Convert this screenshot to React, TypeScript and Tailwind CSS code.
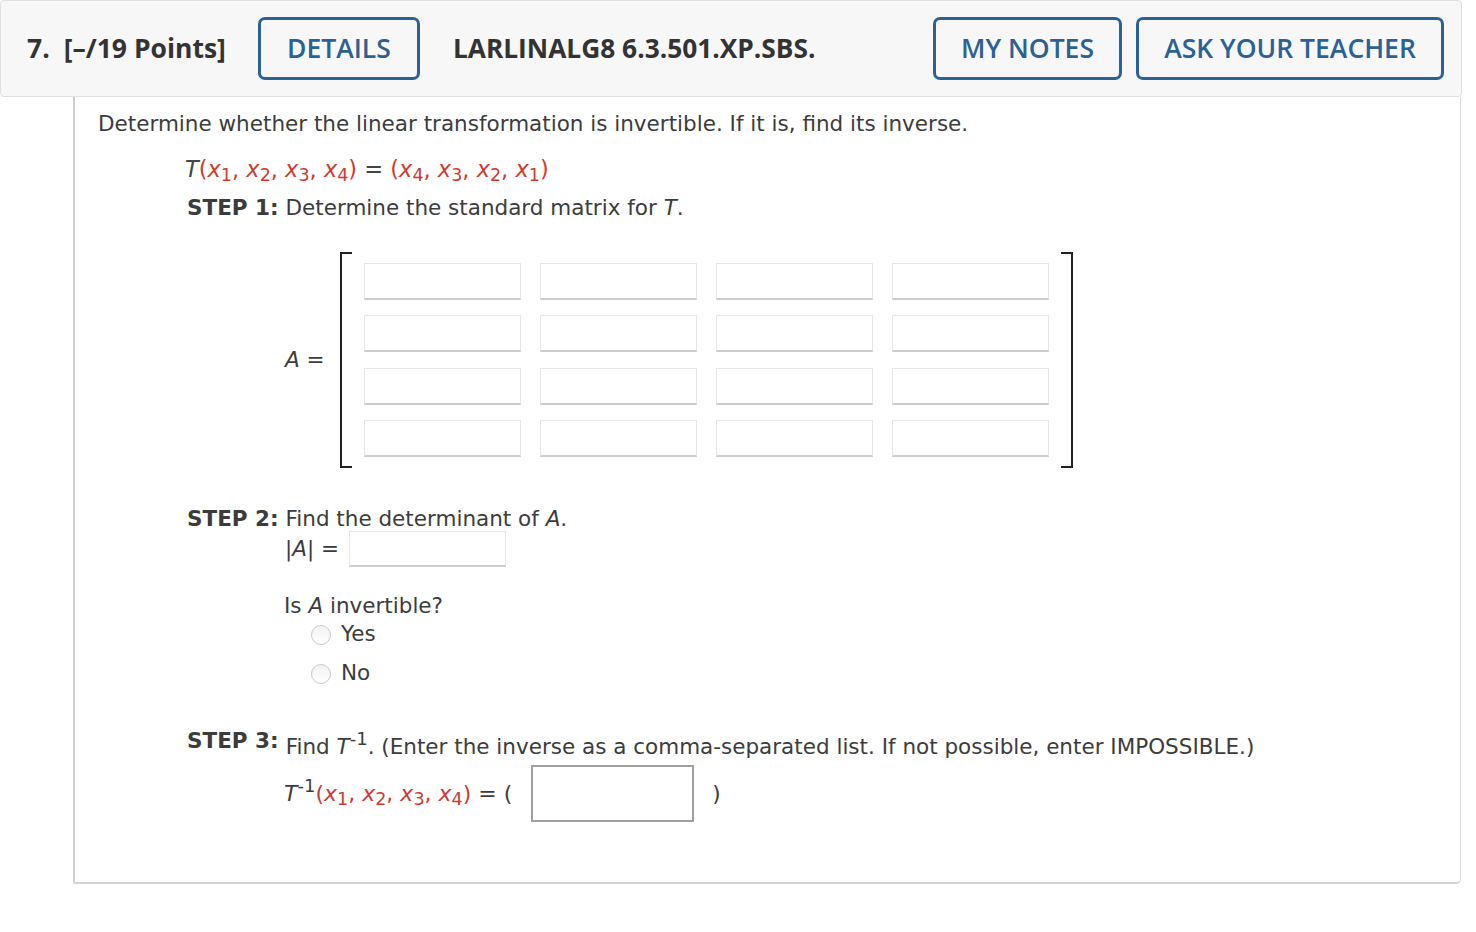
import React from "react";

const RED = "text-[#cf3a2f]";

function X({ n }: { n: number }) {
  return (
    <>
      <i>x</i>
      <sub className="text-[17.5px]">{n}</sub>
    </>
  );
}

function Cell() {
  return <div className="h-[37px] w-[157px] border border-[#e6e6e6] border-b-2 border-b-[#cdcdcd] bg-white" />;
}

function Radio({ label }: { label: string }) {
  return (
    <div className="flex h-[28px] items-center">
      <span className="mt-[2px] inline-block h-[20px] w-[20px] rounded-full border border-[#c9c9c9] bg-gradient-to-b from-[#f2f2f2] to-white" />
      <span className="ml-[10px]">{label}</span>
    </div>
  );
}

function Bracket({ side }: { side: "left" | "right" }) {
  const pos = side === "left" ? "left-0" : "right-0";
  return (
    <div className="relative w-[2px] bg-[#222]">
      <div className={`absolute top-0 h-[2px] w-[12px] bg-[#222] ${pos}`} />
      <div className={`absolute bottom-0 h-[2px] w-[12px] bg-[#222] ${pos}`} />
    </div>
  );
}

export default function App() {
  const btn =
    "flex h-[63px] items-center justify-center rounded-[7px] border-[3px] border-[#2c6196] bg-transparent text-[26.5px] font-semibold text-[#2c6196]";
  return (
    <div className="min-h-[932px] w-[1476px] bg-white">
      <header className="flex h-[97px] w-[1462px] items-center rounded-[4px] border border-[#e0e0e0] bg-[#f7f7f7] font-['Open_Sans',sans-serif] text-[#333]">
        <span className="ml-[26px] text-[26.5px] font-bold">7.</span>
        <span className="ml-[14px] text-[26.5px] font-bold">[–/19 Points]</span>
        <button className={`${btn} ml-[32px] w-[162px]`}>DETAILS</button>
        <span className="ml-[33px] text-[26.3px] font-bold">LARLINALG8 6.3.501.XP.SBS.</span>
        <div className="flex-1" />
        <button className={`${btn} w-[189px]`}>MY NOTES</button>
        <button className={`${btn} ml-[14px] w-[308px]`}>ASK YOUR TEACHER</button>
        <div className="w-[17px]" />
      </header>

      <main className="ml-[73px] w-[1388px] rounded-br-[5px] border-b-2 border-l-2 border-r border-b-[#d2d2d2] border-l-[#d0d0d0] border-r-[#dcdcdc] pb-[60px] pl-[23px] pt-[13px] font-['DejaVu_Sans',Verdana,sans-serif] text-[21.5px] leading-[28px] text-[#3c3c3c]">
        <div>Determine whether the linear transformation is invertible. If it is, find its inverse.</div>

        <div className="ml-[87px] mt-[17px] text-[22.5px]">
          <i className="text-[#444]">T</i>
          <span className={RED}>
            (<X n={1} />, <X n={2} />, <X n={3} />, <X n={4} />)
          </span>
          <span className="text-[#444]"> = </span>
          <span className={RED}>
            (<X n={4} />, <X n={3} />, <X n={2} />, <X n={1} />)
          </span>
        </div>

        <div className="ml-[89px] mt-[11px]">
          <b>STEP 1:</b> Determine the standard matrix for <i>T</i>.
        </div>

        <div className="ml-[187px] mt-[30px] flex items-center">
          <span>
            <i>A</i> =
          </span>
          <div className="ml-[15px] flex h-[216px] items-stretch">
            <Bracket side="left" />
            <div className="grid grid-cols-4 content-center gap-x-[19px] gap-y-[15.3px] px-[22px]">
              {Array.from({ length: 16 }).map((_, i) => (
                <Cell key={i} />
              ))}
            </div>
            <Bracket side="right" />
          </div>
        </div>

        <div className="ml-[89px] mt-[37px]">
          <b>STEP 2:</b> Find the determinant of <i>A</i>.
        </div>
        <div className="ml-[187px] mt-[-2px] flex h-[36px] items-center">
          <span>
            |<i>A</i>| =
          </span>
          <div className="ml-[10px] h-[36px] w-[157px] border border-[#e6e6e6] border-b-2 border-b-[#cdcdcd]" />
        </div>

        <div className="ml-[186px] mt-[25px]">
          Is <i>A</i> invertible?
        </div>
        <div className="ml-[213px] flex flex-col gap-[11px]">
          <Radio label="Yes" />
          <Radio label="No" />
        </div>

        <div className="ml-[89px] mt-[40px] flex items-start">
          <b>STEP 3:</b>
          <span className="ml-[7px] pt-[6px]">
            Find <i>T</i>
            <sup className="text-[18px]">-1</sup>. (Enter the inverse as a comma-separated list. If not possible, enter IMPOSSIBLE.)
          </span>
        </div>

        <div className="ml-[186px] mt-[4px] flex h-[57px] items-center">
          <span className="text-[22px]">
            <i>T</i>
            <sup className="text-[18px]">-1</sup>
            <span className={RED}>
              (<X n={1} />, <X n={2} />, <X n={3} />, <X n={4} />)
            </span>{" "}
            = (
          </span>
          <div className="ml-[19px] h-[57px] w-[163px] border-2 border-[#a0a0a0] bg-white" />
          <span className="ml-[18px]">)</span>
        </div>
      </main>
    </div>
  );
}
